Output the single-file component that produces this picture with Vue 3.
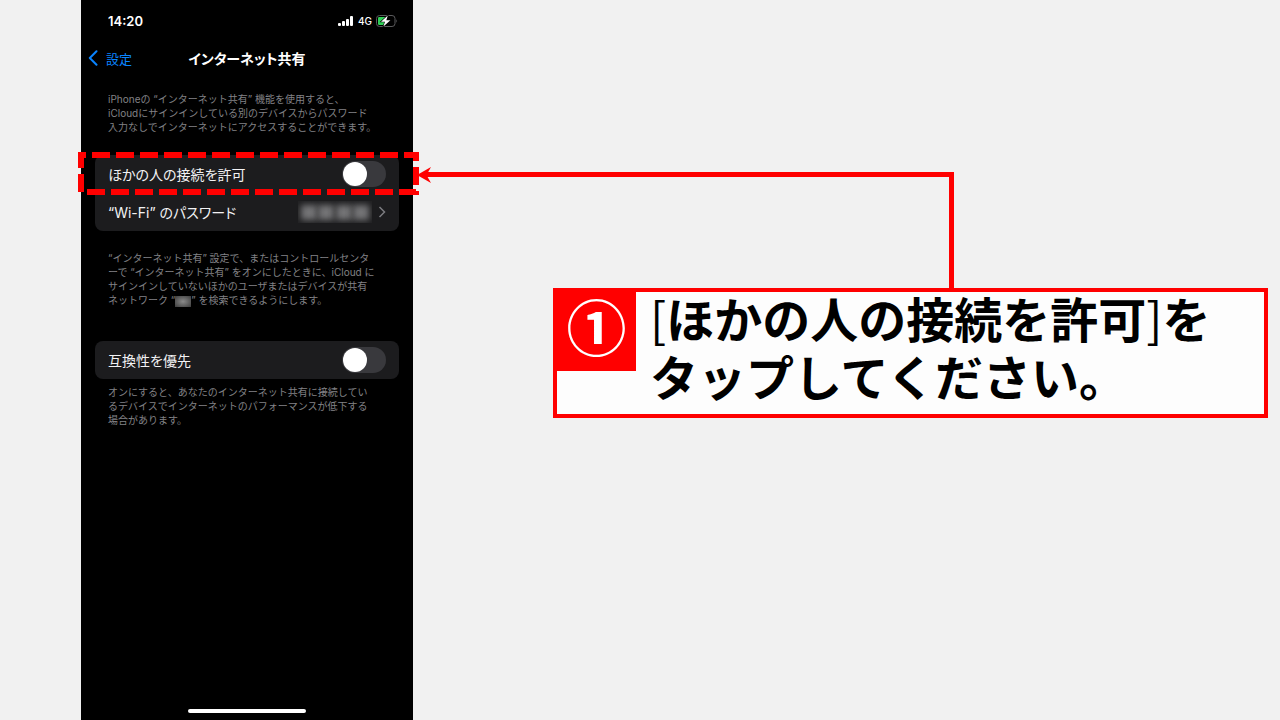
<script setup>
import { reactive } from 'vue'

const toggles = reactive({ allow: false, compat: false })
</script>

<template>
  <main class="slide">
    <section class="phone">
      <header class="status">
        <span class="clock">14:20</span>
        <span class="indicators">
          <svg class="signal" viewBox="0 0 16 10" aria-hidden="true">
            <rect x="0" y="7" width="3" height="3" rx="1" />
            <rect x="4" y="5" width="3" height="5" rx="1" />
            <rect x="8" y="3" width="3" height="7" rx="1" />
            <rect x="12" y="0" width="3" height="10" rx="1" />
          </svg>
          <span class="network">4G</span>
          <svg class="battery" viewBox="0 0 22 12" aria-hidden="true">
            <rect x="0.5" y="0.5" width="18.5" height="11" rx="3" fill="none" stroke="#5a5a5c" />
            <path d="M20.3 4.2 Q22 6 20.3 7.8 Z" fill="#5a5a5c" />
            <path d="M3.2 2 H9 V10 H3.2 Q2 10 2 8.800 V3.200 Q2 2 3.200 2 Z" fill="#30d158" />
            <path d="M11.800 0.500 L5 6.700 H9 L7.400 11.500 L14.400 5.200 H10.300 Z" fill="#fff" stroke="#000" stroke-width="1.200" paint-order="stroke" />
          </svg>
        </span>
      </header>

      <nav class="nav">
        <a class="back" href="#settings">
          <svg viewBox="0 0 10 16" aria-hidden="true"><path d="M8.500 1.200 L1.800 8 L8.500 14.800" /></svg>
          <span>設定</span>
        </a>
        <h1>インターネット共有</h1>
      </nav>

      <p class="note intro">iPhoneの “インターネット共有” 機能を使用すると、<br>iCloudにサインインしている別のデバイスからパスワード<br>入力なしでインターネットにアクセスすることができます。</p>

      <div class="group">
        <div class="row">
          <label for="allow">ほかの人の接続を許可</label>
          <input id="allow" v-model="toggles.allow" class="switch" type="checkbox" role="switch">
          <svg class="highlight" aria-hidden="true"><rect x="3" y="3" /></svg>
        </div>
        <button class="row link" type="button">
          <span>“Wi-Fi” のパスワード</span>
          <span class="value">
            <span class="masked"><i></i><i></i><i></i><i></i></span>
            <svg class="chevron" viewBox="0 0 8 12" aria-hidden="true"><path d="M1.500 1 L6.500 6 L1.500 11" /></svg>
          </span>
        </button>
      </div>

      <p class="note network-note">“インターネット共有” 設定で、またはコントロールセンタ<br>ーで “インターネット共有” をオンにしたときに、iCloud に<br>サインインしていないほかのユーザまたはデバイスが共有<br>ネットワーク “<span class="masked-name"></span>” を検索できるようにします。</p>

      <div class="group">
        <div class="row">
          <label for="compat">互換性を優先</label>
          <input id="compat" v-model="toggles.compat" class="switch" type="checkbox" role="switch">
        </div>
      </div>

      <p class="note compat-note">オンにすると、あなたのインターネット共有に接続してい<br>るデバイスでインターネットのパフォーマンスが低下する<br>場合があります。</p>

      <div class="home-bar"></div>
    </section>

    <section class="annotation">
      <div class="connector">
        <svg class="arrowhead" viewBox="0 0 14 16" aria-hidden="true"><path d="M0 8 L14 0 L9.500 8 L14 16 Z" /></svg>
      </div>
      <div class="callout">
        <span class="badge">①</span>
        <p><span class="bracket">[</span>ほかの人の接続を許可<span class="bracket">]</span>を<br>タップしてください。</p>
      </div>
    </section>
  </main>
</template>

<style>
body {
  margin: 0;
  background: #f1f1f1;
}
</style>

<style scoped>
.slide {
  display: flex;
  min-height: 100vh;
  box-sizing: border-box;
  padding-left: 81px;
  background: #f1f1f1;
  font-family: Inter, "Noto Sans CJK JP", sans-serif;
}

.phone {
  flex: 0 0 332px;
  display: flex;
  flex-direction: column;
  box-sizing: border-box;
  padding: 0 14px 7px;
  background: #000;
  color: #fff;
}

.status {
  display: flex;
  justify-content: space-between;
  align-items: center;
  height: 42px;
  padding: 0 1px 0 13px;
}

.clock {
  font-size: 13px;
  font-weight: 600;
}

.indicators {
  display: flex;
  align-items: center;
  gap: 4px;
}

.signal {
  width: 16px;
  height: 10px;
  fill: #fff;
}

.network {
  font-size: 10px;
  font-weight: 500;
}

.battery {
  width: 22px;
  height: 12px;
}

.nav {
  display: grid;
  grid-template-columns: 1fr auto 1fr;
  align-items: center;
  height: 32px;
}

.back {
  display: flex;
  align-items: center;
  gap: 8px;
  margin-left: -7px;
  color: #0a84ff;
  font-size: 13px;
  text-decoration: none;
}

.back svg {
  width: 10px;
  height: 16px;
  fill: none;
  stroke: #0a84ff;
  stroke-width: 2;
  stroke-linecap: round;
  stroke-linejoin: round;
}

h1 {
  margin: 0;
  font-size: 14px;
  font-weight: 700;
  font-feature-settings: "palt";
}

.note {
  margin: 0 0 0 13px;
  color: #828286;
  font-size: 10px;
  line-height: 14px;
  white-space: nowrap;
}

.intro {
  margin-top: 18px;
  margin-bottom: 21px;
}

.network-note {
  margin-top: 20px;
  margin-bottom: 34px;
}

.compat-note {
  margin-top: 6px;
}

.group {
  border-radius: 8px;
  background: #1c1c1e;
}

.row {
  position: relative;
  display: flex;
  justify-content: space-between;
  align-items: center;
  width: 100%;
  height: 38px;
  box-sizing: border-box;
  padding: 0 13px;
  border: 0;
  background: none;
  color: #f2f2f4;
  font-family: inherit;
  font-size: 14px;
  font-feature-settings: "palt";
  text-align: left;
}

.switch {
  appearance: none;
  width: 44px;
  height: 26px;
  box-sizing: border-box;
  margin: 0;
  padding: 1px;
  border-radius: 13px;
  background: #39393d;
}

.switch::before {
  content: "";
  display: block;
  width: 24px;
  height: 24px;
  border-radius: 50%;
  background: #fff;
}

.switch:checked {
  background: #30d158;
}

.switch:checked::before {
  margin-left: 18px;
}

.highlight {
  position: absolute;
  top: -3px;
  left: -17px;
  width: calc(100% + 37px);
  height: 43px;
  pointer-events: none;
}

.highlight rect {
  width: calc(100% - 6px);
  height: calc(100% - 6px);
  fill: none;
  stroke: #f00;
  stroke-width: 6;
  stroke-dasharray: 18 6;
  stroke-dashoffset: 13;
}

.value {
  display: flex;
  align-items: center;
  gap: 6px;
}

.masked {
  display: flex;
  justify-content: space-between;
  align-items: center;
  width: 74px;
  height: 22px;
  box-sizing: border-box;
  padding: 0 3px;
  background: #1f1f21;
  overflow: hidden;
}

.masked i {
  width: 16px;
  height: 15px;
  background: #747476;
  filter: blur(3px);
}

.chevron {
  width: 8px;
  height: 12px;
  fill: none;
  stroke: #7c7c80;
  stroke-width: 1.5;
}

.masked-name {
  display: inline-block;
  width: 16px;
  height: 11px;
  vertical-align: -3px;
  background: radial-gradient(#8a8a8a, #3c3c3c);
}

.home-bar {
  width: 118px;
  height: 4px;
  margin: auto auto 0;
  border-radius: 2px;
  background: #fff;
}

.annotation {
  flex: 1;
  display: grid;
  grid-template-columns: 140px 1fr;
  align-content: start;
  padding: 172px 12px 0 0;
}

.connector {
  position: relative;
  grid-column: 1 / -1;
  width: 62%;
  height: 116px;
  box-sizing: border-box;
  margin-left: 11px;
  border-top: 5px solid #f00;
  border-right: 5px solid #f00;
}

.arrowhead {
  position: absolute;
  top: -10px;
  left: -7px;
  width: 14px;
  height: 16px;
  fill: #f00;
}

.callout {
  grid-column: 2;
  display: flex;
  align-items: flex-start;
  gap: 14px;
  min-height: 130px;
  box-sizing: border-box;
  border: 4px solid #f00;
  background: #fdfdfd;
}

.badge {
  flex: none;
  width: 79px;
  height: 79px;
  background: #f00;
  color: #fff;
  font-family: "Noto Sans CJK JP", sans-serif;
  font-size: 60px;
  font-weight: 700;
  line-height: 66px;
  text-align: center;
}

.callout p {
  margin: -4px 0 0;
  color: #000;
  font-family: "Noto Sans CJK JP", sans-serif;
  font-size: 48px;
  font-weight: 700;
  line-height: 58px;
  white-space: nowrap;
}

.bracket {
  display: inline-block;
  font-weight: 400;
}
</style>
